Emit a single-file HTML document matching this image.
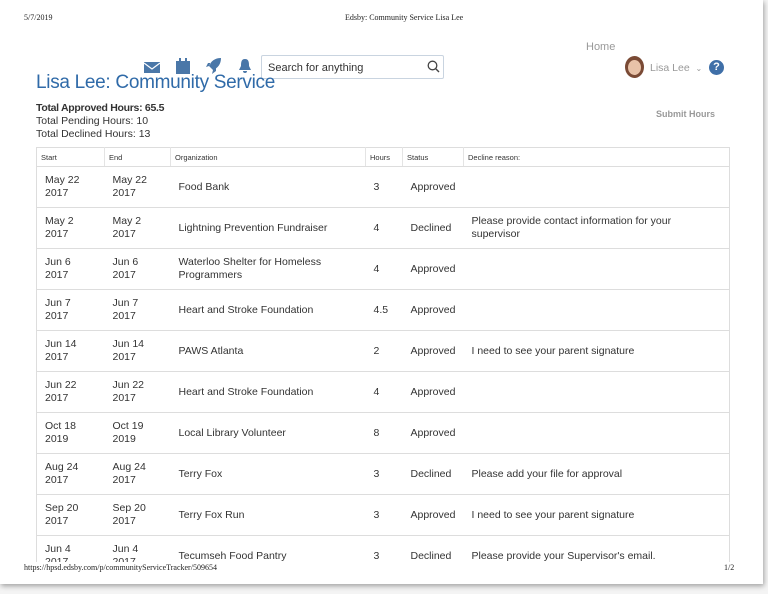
<!DOCTYPE html>
<html><head><meta charset="utf-8"><style>
*{margin:0;padding:0;box-sizing:border-box}
body{width:768px;height:594px;background:#f4f4f4;position:relative;overflow:hidden;font-family:"Liberation Sans",sans-serif;color:#333}
.sheet{position:absolute;left:0;top:0;width:763px;height:584px;background:#fff;box-shadow:1px 2px 5px rgba(0,0,0,.35);overflow:hidden}
.a{position:absolute;white-space:nowrap}
.ser{font-family:"Liberation Serif",serif;font-size:8px;color:#222}
table{position:absolute;left:36px;top:147px;width:694px;border-collapse:collapse;font-size:10.5px}
td,th{border-bottom:1px solid #ddd;vertical-align:middle;text-align:left}
th{height:19px;font-size:7.5px;font-weight:normal;padding-left:4px;border-right:1px solid #e4e4e4}
td{height:41px;padding-left:8px;line-height:13px}
table{border:1px solid #ddd}
</style></head><body>
<div class="sheet">
<div class="a ser" style="left:24px;top:13px">5/7/2019</div>
<div class="a ser" style="left:345px;top:13px">Edsby: Community Service Lisa Lee</div>
<div class="a" style="left:586px;top:41px;font-size:11px;color:#999">Home</div>
<svg class="a" style="left:144px;top:61px" width="16" height="13"><rect x="0" y="1" width="16" height="11" fill="#4a77a8"/><path d="M0 2 L8 8 L16 2" stroke="#fff" fill="none" stroke-width="1.2"/></svg>
<svg class="a" style="left:176px;top:58px" width="14" height="16"><rect x="0" y="3" width="14" height="13" fill="#4a77a8"/><rect x="3" y="0" width="2" height="4" fill="#4a77a8"/><rect x="9" y="0" width="2" height="4" fill="#4a77a8"/></svg>
<svg class="a" style="left:206px;top:58px" width="16" height="16"><path d="M15 0 C9 0 5 3 3 8 L7 12 C12 10 15 6 15 0Z M3 8 L0 9 L2 5 L5 5Z M7 12 L6 16 L10 13 L10 10Z" fill="#4a77a8"/></svg>
<svg class="a" style="left:238px;top:58px" width="14" height="16"><path d="M7 1 C3 1 3 5 3 8 L1 12 H13 L11 8 C11 5 11 1 7 1Z M5 13 A2 2 0 0 0 9 13Z" fill="#4a77a8"/></svg>
<div class="a" style="left:261px;top:55px;width:183px;height:24px;border:1px solid #c9d4e0;border-radius:2px;font-size:11px;padding:6px 0 0 6px;color:#333">Search for anything</div>
<svg class="a" style="left:427px;top:60px" width="13" height="13"><circle cx="5.5" cy="5.5" r="4.3" stroke="#444" fill="none" stroke-width="1.3"/><path d="M8.5 8.5 L12 12" stroke="#444" stroke-width="1.4"/></svg>
<div class="a" style="left:625px;top:56px;width:19px;height:22px;border-radius:50%;background:#7a4a35"></div>
<div class="a" style="left:628px;top:60px;width:13px;height:15px;border-radius:50%;background:#e8c2a8"></div>
<div class="a" style="left:650px;top:62px;font-size:10.5px;color:#999">Lisa Lee &nbsp;<span style="font-size:8px">&#8964;</span></div>
<div class="a" style="left:709px;top:60px;width:15px;height:15px;border-radius:50%;background:#3f6fa8;color:#fff;font-size:11px;font-weight:bold;text-align:center;line-height:15px">?</div>
<div class="a" style="left:36px;top:72px;font-size:19px;color:#2f6aa8;letter-spacing:-.3px">Lisa Lee: Community Service</div>
<div class="a" style="left:36px;top:102px;font-size:10.5px;font-weight:bold;letter-spacing:-.3px">Total Approved Hours: 65.5</div>
<div class="a" style="left:36px;top:115px;font-size:10.5px">Total Pending Hours: 10</div>
<div class="a" style="left:36px;top:128px;font-size:10.5px">Total Declined Hours: 13</div>
<div class="a" style="left:656px;top:109px;font-size:9px;color:#999;font-weight:bold">Submit Hours</div>
<table>
<tr><th style="width:68px">Start</th><th style="width:66px">End</th><th style="width:195px">Organization</th><th style="width:37px">Hours</th><th style="width:61px">Status</th><th style="border-right:none">Decline reason:</th></tr>
<tr><td>May 22<br>2017</td><td>May 22<br>2017</td><td>Food Bank</td><td>3</td><td>Approved</td><td></td></tr>
<tr><td>May 2<br>2017</td><td>May 2<br>2017</td><td>Lightning Prevention Fundraiser</td><td>4</td><td>Declined</td><td>Please provide contact information for your<br>supervisor</td></tr>
<tr><td>Jun 6<br>2017</td><td>Jun 6<br>2017</td><td>Waterloo Shelter for Homeless<br>Programmers</td><td>4</td><td>Approved</td><td></td></tr>
<tr><td>Jun 7<br>2017</td><td>Jun 7<br>2017</td><td>Heart and Stroke Foundation</td><td>4.5</td><td>Approved</td><td></td></tr>
<tr><td>Jun 14<br>2017</td><td>Jun 14<br>2017</td><td>PAWS Atlanta</td><td>2</td><td>Approved</td><td>I need to see your parent signature</td></tr>
<tr><td>Jun 22<br>2017</td><td>Jun 22<br>2017</td><td>Heart and Stroke Foundation</td><td>4</td><td>Approved</td><td></td></tr>
<tr><td>Oct 18<br>2019</td><td>Oct 19<br>2019</td><td>Local Library Volunteer</td><td>8</td><td>Approved</td><td></td></tr>
<tr><td>Aug 24<br>2017</td><td>Aug 24<br>2017</td><td>Terry Fox</td><td>3</td><td>Declined</td><td>Please add your file for approval</td></tr>
<tr><td>Sep 20<br>2017</td><td>Sep 20<br>2017</td><td>Terry Fox Run</td><td>3</td><td>Approved</td><td>I need to see your parent signature</td></tr>
<tr><td>Jun 4<br>2017</td><td>Jun 4<br>2017</td><td>Tecumseh Food Pantry</td><td>3</td><td>Declined</td><td>Please provide your Supervisor's email.</td></tr>
</table>
<div class="a" style="left:0;top:562px;width:763px;height:22px;background:#fff"></div>
<div class="a ser" style="left:24px;top:563px">https://hpsd.edsby.com/p/communityServiceTracker/509654</div>
<div class="a ser" style="left:724px;top:563px">1/2</div>
</div>
</body></html>
